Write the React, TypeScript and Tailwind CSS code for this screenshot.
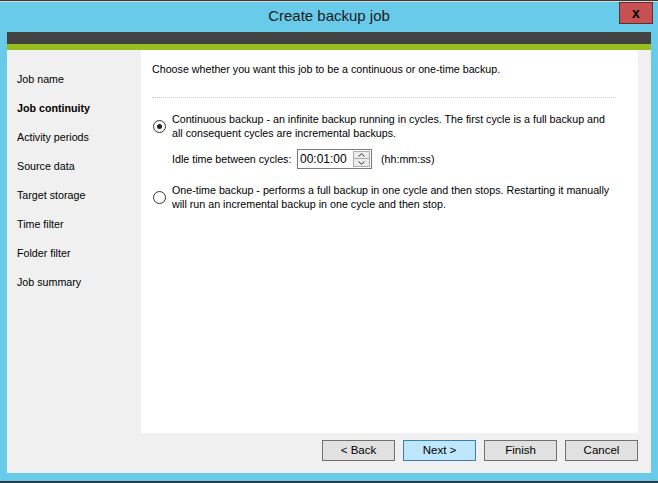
import React from 'react';

const steps = [
  'Job name',
  'Job continuity',
  'Activity periods',
  'Source data',
  'Target storage',
  'Time filter',
  'Folder filter',
  'Job summary',
];

function Radio({ checked }: { checked?: boolean }) {
  return (
    <div className="w-[13px] h-[13px] rounded-full border border-[#333] bg-white flex items-center justify-center shrink-0">
      {checked && <div className="w-[5px] h-[5px] rounded-full bg-[#222]" />}
    </div>
  );
}

function Btn({ label, primary }: { label: string; primary?: boolean }) {
  return (
    <button
      className={
        primary
          ? 'w-[73px] h-[21px] border border-[#3c7fb1] bg-[#bee6fd] text-[11.5px] leading-none text-black'
          : 'w-[73px] h-[21px] border border-[#707070] bg-[#e1e1e1] text-[11.5px] leading-none text-black'
      }
    >
      {label}
    </button>
  );
}

export default function App() {
  return (
    <div
      className="w-[658px] h-[483px] flex flex-col bg-[#69cbea] overflow-hidden text-black"
      style={{ fontFamily: '"Liberation Sans", Arial, sans-serif' }}
    >
      <div className="h-px bg-[#3a3a3a]" />
      <div className="h-px bg-[#d6d6d6]" />

      {/* Title bar */}
      <div className="h-[30px] relative flex items-center justify-center">
        <span className="text-[15px] text-[#1a1a1a] -mt-[1px]">Create backup job</span>
        <div className="absolute right-[5px] top-0 w-[34px] h-[22px] bg-[#c75050] border border-[#5e3030] flex items-center justify-center">
          <span className="text-[14px] font-bold leading-none">x</span>
        </div>
      </div>

      {/* Window body */}
      <div className="mx-[7px] flex flex-col">
        <div className="h-[12px] bg-[#424242]" />
        <div className="h-[6px] bg-[#95bf1e]" />
        <div className="h-[423px] bg-[#f0f0f0] flex">
          {/* Steps */}
          <div className="w-[134px] pt-[22px] pl-[10px] flex flex-col gap-[15px] text-[10.7px] leading-[14px]">
            {steps.map((s) => (
              <div key={s} className={s === 'Job continuity' ? 'font-bold' : ''}>
                {s}
              </div>
            ))}
          </div>

          {/* Main */}
          <div className="flex-1 flex flex-col">
            <div className="w-[497px] h-[383px] bg-white pt-[12px] pl-[11px] text-[10.7px] leading-[14px]">
              <div>Choose whether you want this job to be a continuous or one-time backup.</div>
              <div className="mt-[21px] w-[464px] border-t border-dotted border-[#c8c8c8]" />

              <div className="mt-[14px] flex items-center">
                <div className="ml-[1px] w-[19px]">
                  <Radio checked />
                </div>
                <div>
                  Continuous backup - an infinite backup running in cycles. The first cycle is a full backup and
                  <br />
                  all consequent cycles are incremental backups.
                </div>
              </div>

              <div className="mt-[9px] ml-[20px] flex items-center">
                <span className="w-[125px]">Idle time between cycles:</span>
                <div className="w-[75px] h-[20px] border border-[#7a7a7a] flex items-center pl-[2px] text-[12px]">
                  <span className="flex-1">00:01:00</span>
                  <div className="w-[17px] h-[16px] mr-[1px] flex flex-col border border-[#acacac]">
                    <div className="h-[7px] bg-[#ececec] border-b border-[#acacac] flex items-center justify-center">
                      <svg width="7" height="4" viewBox="0 0 7 4">
                        <path d="M0.5 3.5 L3.5 0.8 L6.5 3.5" fill="none" stroke="#333" strokeWidth="1" />
                      </svg>
                    </div>
                    <div className="flex-1 bg-[#ececec] flex items-center justify-center">
                      <svg width="7" height="4" viewBox="0 0 7 4">
                        <path d="M0.5 0.5 L3.5 3.2 L6.5 0.5" fill="none" stroke="#333" strokeWidth="1" />
                      </svg>
                    </div>
                  </div>
                </div>
                <span className="ml-[9px]">(hh:mm:ss)</span>
              </div>

              <div className="mt-[14px] flex items-center">
                <div className="ml-[1px] w-[19px]">
                  <Radio />
                </div>
                <div>
                  One-time backup - performs a full backup in one cycle and then stops. Restarting it manually
                  <br />
                  will run an incremental backup in one cycle and then stop.
                </div>
              </div>
            </div>

            <div className="w-[497px] mt-[7px] flex justify-end gap-[8px]">
              <Btn label="< Back" />
              <Btn label="Next >" primary />
              <Btn label="Finish" />
              <Btn label="Cancel" />
            </div>
          </div>
        </div>
      </div>

      <div className="h-[8px]" />
      <div className="h-[2px] bg-[#2e3a40]" />
    </div>
  );
}
